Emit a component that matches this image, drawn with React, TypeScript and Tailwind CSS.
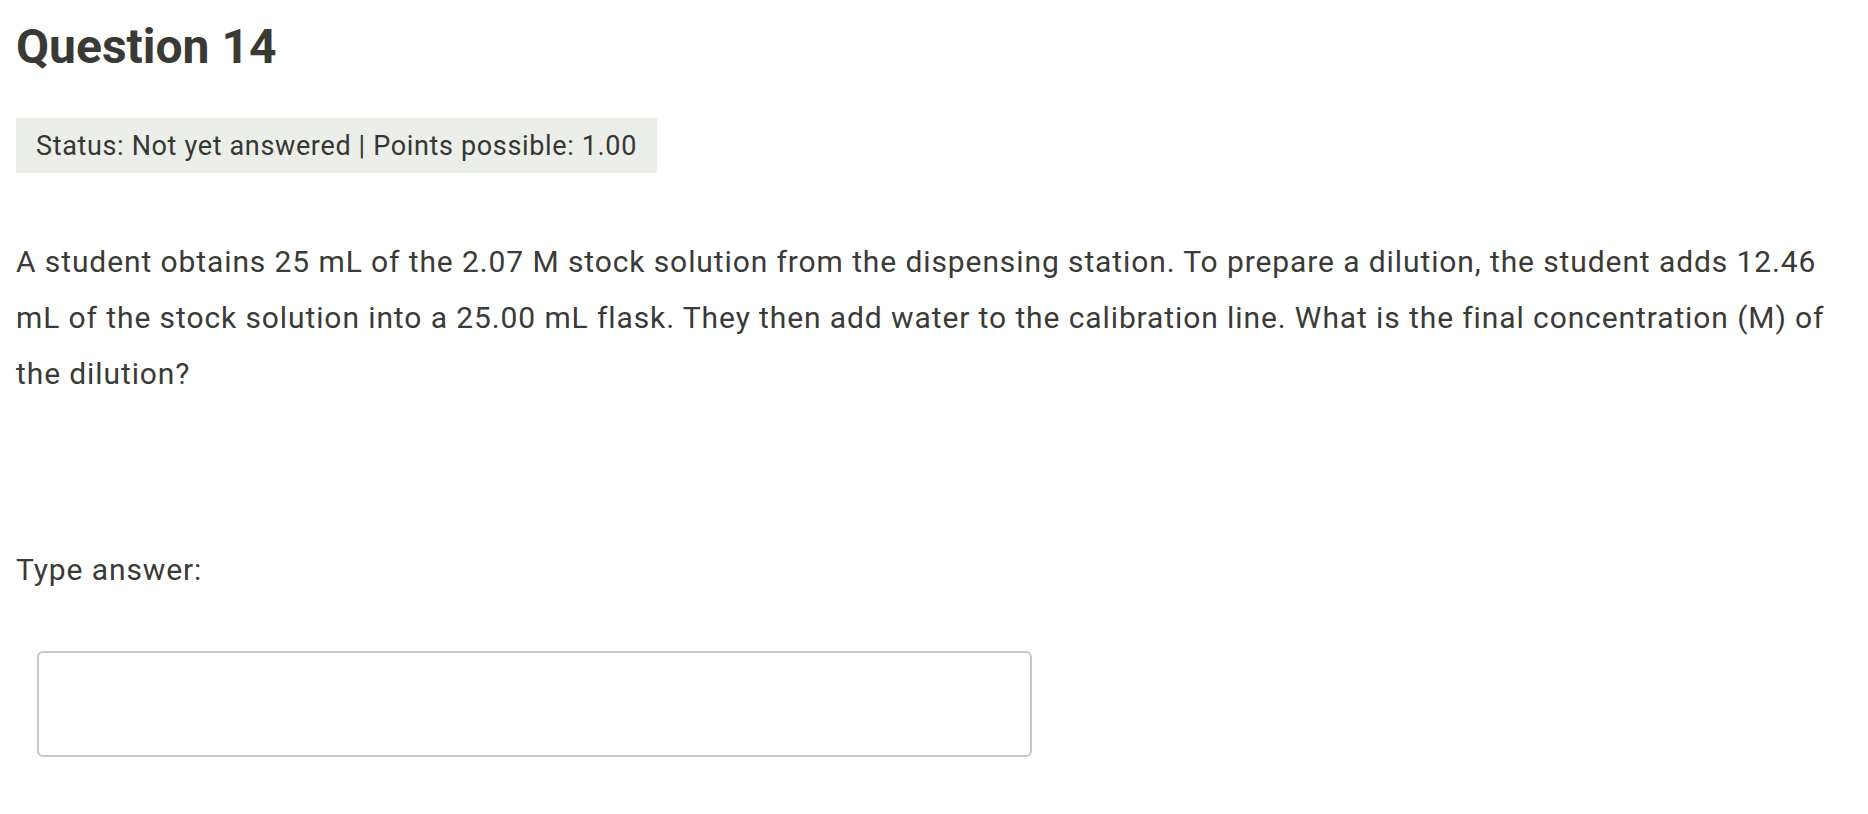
import * as React from "react";

export default function App() {
  const [answer, setAnswer] = React.useState("");

  return (
    <div className="min-h-screen bg-white px-4 pt-[18px] font-['Roboto','Liberation_Sans',sans-serif] text-[#3a3a36]">
      <h1 className="text-[48px] font-bold leading-[1.2] text-[#3a3a35]">Question 14</h1>

      <div className="mt-[42px] flex h-[55px] w-fit items-center bg-[#eceeea] px-5 pt-[2px] text-[27px] tracking-[0.65px] text-[#363633]">
        Status: Not yet answered | Points possible: 1.00
      </div>

      <p className="mt-[61px] text-[30px] leading-[56px] tracking-[0.9px]">
        A student obtains 25 mL of the 2.07 M stock solution from the dispensing station. To prepare a dilution, the
        student adds 12.46 mL of the stock solution into a 25.00 mL flask. They then add water to the calibration line.
        What is the final concentration (M) of the dilution?
      </p>

      <p className="mt-[140px] text-[30px] leading-[56px] tracking-[0.9px]">Type answer:</p>

      <div className="ml-[21px] mt-[53px]">
        <input
          type="text"
          value={answer}
          onChange={(e) => setAnswer(e.target.value)}
          className="h-[106px] w-[995px] rounded-md border-2 border-[#c6c6c6] bg-white px-4 text-[30px] outline-none"
        />
      </div>
    </div>
  );
}
